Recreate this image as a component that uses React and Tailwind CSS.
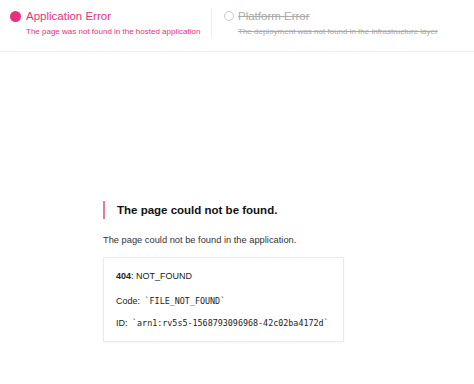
import React from 'react';

export default function App() {
  return (
    <div className="w-[474px] h-[384px] bg-white overflow-hidden" style={{ fontFamily: '"Liberation Sans", Arial, sans-serif' }}>
      {/* Top tabs */}
      <header className="h-[52px] border-b border-[#eeeeee] flex items-start pt-[8px]">
        <div className="flex items-start pl-[10px] w-[211px]">
          <span className="mt-[3px] w-[11px] h-[11px] rounded-full bg-[#e7327a]" />
          <div className="ml-[5px] flex flex-col">
            <span className="text-[11.5px] leading-[16px] text-[#e7327a]">Application Error</span>
            <span className="mt-[3px] text-[8px] leading-[10px] text-[#e7327a]">The page was not found in the hosted application</span>
          </div>
        </div>
        <div className="w-px h-[29px] bg-[#eeeeee]" />
        <div className="flex items-start pl-[12px]">
          <span className="mt-[3px] w-[10px] h-[10px] rounded-full border border-[#cccccc]" />
          <div className="ml-[4px] flex flex-col">
            <span className="text-[11.5px] leading-[16px] text-[#aaaaaa] line-through">Platform Error</span>
            <span className="mt-[3px] text-[8px] leading-[10px] text-[#aaaaaa] line-through">The deployment was not found in the infrastructure layer</span>
          </div>
        </div>
      </header>

      {/* Error body */}
      <main className="w-[268px] mx-auto pt-[149px]">
        <div className="flex items-center gap-[12px]">
          <span className="w-[2px] h-[18px] bg-[#e77aa2]" />
          <h1 className="text-[11.5px] font-bold text-[#111111] leading-[18px]">The page could not be found.</h1>
        </div>
        <p className="mt-[15px] text-[9.3px] leading-[12px] text-[#333333]">The page could not be found in the application.</p>
        <div className="mt-[11px] w-[241px] border border-[#eaeaea] shadow-[0_1px_2px_rgba(0,0,0,0.04)] px-[12px] pt-[12px] pb-[12px] text-[9px] text-[#222222]">
          <div className="leading-[12px]"><span className="font-bold">404</span>: NOT_FOUND</div>
          <div className="mt-[13px] leading-[12px]">Code: <span className="ml-[2px] text-[8.4px]" style={{ fontFamily: '"DejaVu Sans Mono", monospace' }}>`FILE_NOT_FOUND`</span></div>
          <div className="mt-[10px] leading-[12px]">ID: <span className="ml-[2px] text-[8.4px]" style={{ fontFamily: '"DejaVu Sans Mono", monospace' }}>`arn1:rv5s5-1568793096968-42c02ba4172d`</span></div>
        </div>
      </main>
    </div>
  );
}
